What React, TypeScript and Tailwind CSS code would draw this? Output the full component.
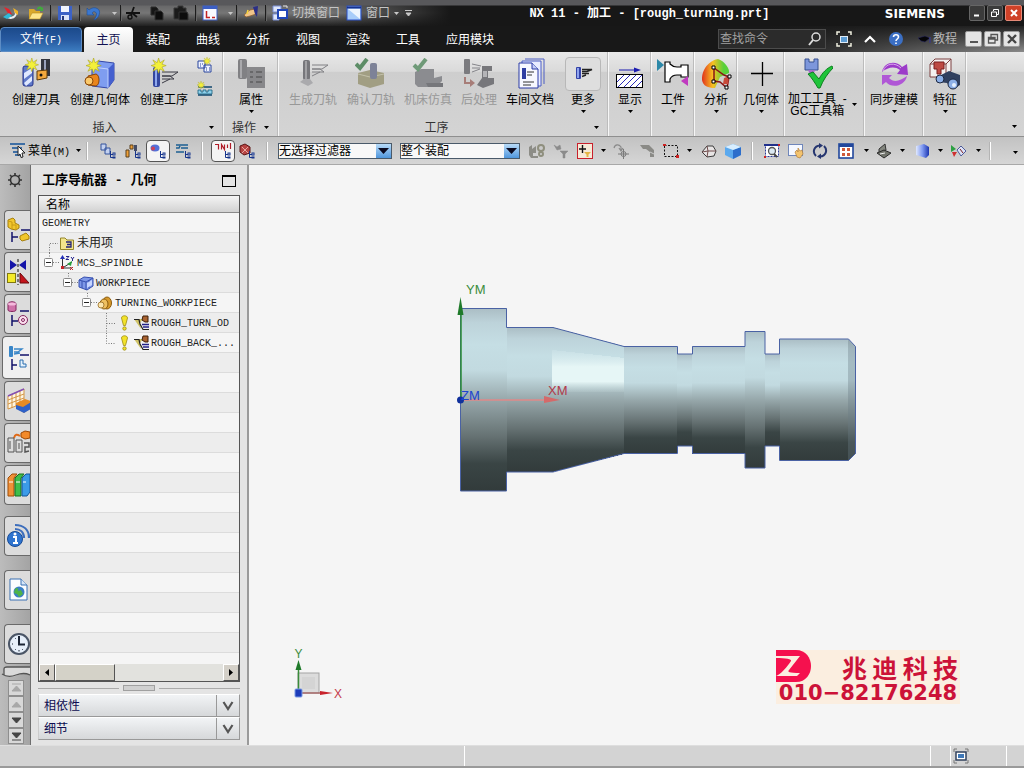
import type { ReactNode } from 'react'
import { clsx } from 'clsx'

// ---------- drawing helpers ----------

function Svg({ w = 16, h = 16, children }: { w?: number; h?: number; children: ReactNode }) {
  return (
    <svg width={w} height={h} viewBox={`0 0 ${w} ${h}`} className="block shrink-0" aria-hidden="true">
      {children}
    </svg>
  )
}

function Caret({ light }: { light?: boolean }) {
  return (
    <Svg w={5} h={3}>
      <path d="M0 0H5L2.5 3Z" fill={light ? '#c8c8c8' : '#000'} />
    </Svg>
  )
}

const SPARK = 'M8 0L9.5 5L14 2L11.5 6.5L16 8L11.5 9.5L14 14L9.5 11.5L8 16L6.5 11.5L2 14L4.5 9.5L0 8L4.5 6.5L2 2L6.5 5Z'

function Spark({ x, y, s = 1 }: { x: number; y: number; s?: number }) {
  return <path transform={`translate(${x} ${y}) scale(${s})`} d={SPARK} fill="#f3f03a" stroke="#a9a21c" strokeWidth="0.6" />
}

// cylinder cutter with feed lines beside it
function Mill({ gray, x = 0, y = 0, s = 1 }: { gray?: boolean; x?: number; y?: number; s?: number }) {
  const c = gray ? ['#77777b', '#a2a2a5', '#808084'] : ['#34479f', '#8fa8ee', '#3a3a44']
  return (
    <g transform={`translate(${x} ${y}) scale(${s})`}>
      <rect x="0" y="0" width="7" height="20" rx="2" fill={c[0]} />
      <rect x="2" y="1" width="2" height="18" fill={c[1]} />
      <path d="M9 5H25L19 9H9M9 9H17L21 12H9M9 16L17 12" fill="none" stroke={c[2]} />
    </g>
  )
}

// ---------- ribbon icons (32 x 32) ----------

const CreateTool = () => (
  <Svg w={32} h={32}>
    <rect x="21" y="1" width="9" height="17" fill="#33363f" />
    <rect x="24" y="2" width="2" height="14" fill="#9aa3bd" />
    <path d="M17 13L27 12V20L17 22Z" fill="#f3a83c" stroke="#5d3a0a" />
    <circle cx="21" cy="17" r="1.5" fill="#111" />
    <rect x="3" y="8" width="10" height="20" rx="2" fill="#5f79c9" stroke="#26348c" />
    <path d="M4 15L12 10V15L4 21ZM4 25L12 18V23L6 28Z" fill="#dfe8ff" />
    <Spark x={5} y={0} s={0.85} />
  </Svg>
)

const CreateGeometry = () => (
  <Svg w={32} h={32}>
    <path d="M8 9L14 3L30 5V22L24 30L8 28Z" fill="#7f9df0" stroke="#3347a8" />
    <path d="M24 11L30 5V22L24 30Z" fill="#4560cf" />
    <path d="M8 9L24 11V30" fill="none" stroke="#c3d2ff" />
    <path d="M4 18L12 16C16 17 16 27 12 28L4 27Z" fill="#e9851c" stroke="#8a4607" />
    <circle cx="5" cy="23" r="4" fill="#fbc96b" stroke="#8a4607" />
    <Spark x={2} y={0} s={0.95} />
  </Svg>
)

const CreateOperation = () => (
  <Svg w={32} h={32}>
    <Mill x={5} y={9} />
    <Spark x={3} y={0} s={0.95} />
  </Svg>
)

const PropertiesIcon = () => (
  <Svg w={32} h={32}>
    <rect x="3" y="1" width="9" height="20" rx="2" fill="#818184" />
    <rect x="5" y="2" width="2" height="18" fill="#a9a9ac" />
    <rect x="12" y="9" width="18" height="21" fill="#88888b" />
    <path d="M15 14h3M15 19h3M15 24h3M21 14h6M21 19h6M21 24h6" stroke="#5d5d60" strokeWidth="1.5" />
  </Svg>
)

const GenerateIcon = () => (
  <Svg w={32} h={32}>
    <Mill gray x={6} y={2} />
    <path d="M3 24L7 21H13L16 25L11 28Z" fill="#aaaaad" />
  </Svg>
)

const VerifyIcon = () => (
  <Svg w={32} h={32}>
    <path d="M3 15L15 12L29 15V26L15 30L3 26Z" fill="#a19e83" />
    <path d="M3 16L15 19L29 16" fill="none" stroke="#c3c1aa" />
    <rect x="15" y="5" width="7" height="16" rx="2" fill="#7d8297" />
    <path d="M1 6L5 10L12 1" fill="none" stroke="#5d8d67" strokeWidth="4" />
  </Svg>
)

const SimulateIcon = () => (
  <Svg w={32} h={32}>
    <path d="M3 14L9 11H22V20L30 18V23L24 29H6L3 26Z" fill="#8b8c90" />
    <path d="M14 25H31V29H16Z" fill="#76777b" />
    <path d="M2 7L6 11L14 1" fill="none" stroke="#6f9a78" strokeWidth="4" />
  </Svg>
)

const PostIcon = () => (
  <Svg w={32} h={32}>
    <rect x="1" y="1" width="6" height="15" rx="1" fill="#7b7b7f" />
    <path d="M9 6L18 8M9 10H17M9 14L17 11" stroke="#85858a" />
    <path d="M2 19V25H8" fill="none" stroke="#a77d78" strokeWidth="2" />
    <path d="M7 21L12 25L7 29Z" fill="#a77d78" />
    <path d="M19 8H29V13H25V20H31V26L20 30L14 27L19 20Z" fill="#77777b" />
    <path d="M20 13H24V19H20Z" fill="#b4b4b7" />
  </Svg>
)

const ShopDocIcon = () => (
  <Svg w={32} h={32}>
    <path d="M11 1H30V26" fill="none" stroke="#4a5cc4" />
    <path d="M8 3H27V28H8Z" fill="#e8ecff" stroke="#4a5cc4" />
    <path d="M5 5H18L24 11V30H5Z" fill="#f7f8ff" stroke="#2a3aa6" />
    <path d="M18 5V11H24" fill="#c4cdf7" stroke="#2a3aa6" />
    <rect x="8" y="10" width="4" height="11" fill="#2f3ea2" />
    <path d="M13 14H20M13 17H18M9 24H20M9 27H17" stroke="#333" />
  </Svg>
)

const MoreIcon = () => (
  <Svg w={32} h={32}>
    <rect x="9" y="9" width="5" height="12" rx="1" fill="#3443a8" />
    <rect x="10" y="10" width="2" height="10" fill="#8fa4ee" />
    <path d="M15 11.500H25L20 13.500H15M15 15.500H22M15 18.500L19 17" fill="none" stroke="#222" strokeWidth="1.400" />
  </Svg>
)

const DisplayIcon = () => (
  <Svg w={32} h={32}>
    <path d="M5 12H21" stroke="#1a1ab0" />
    <path d="M20 9.500L27 12L20 14.500Z" fill="#1a1ab0" />
    <rect x="2.500" y="16.500" width="26" height="13" fill="#fff" stroke="#000" />
    <path d="M3 24L10 17M4 29L16 17M10 29L22 17M16 29L28 17M22 29L28 23" stroke="#2b2bb8" />
  </Svg>
)

const WorkpieceIcon = () => (
  <Svg w={32} h={32}>
    <path d="M0 1V13L7 7Z" fill="#2c88a8" />
    <path d="M8 4H13V6C15 8 17 9 20 9H24V7H31V19H24V17H20C16 17 14 19 13 21V24H8Z" fill="#fff" stroke="#000" strokeWidth="1.2" />
    <path d="M24 23L31 18V28Z" fill="#c03ac0" />
  </Svg>
)

const AnalysisIcon = () => (
  <Svg w={32} h={32}>
    <defs>
      <linearGradient id="ana">
        <stop offset="0" stopColor="#e0321c" />
        <stop offset="0.4" stopColor="#f8c022" />
        <stop offset="0.8" stopColor="#58d03a" />
      </linearGradient>
    </defs>
    <path d="M2 22C2 8 12 2 18 1C24 3 30 10 29 15L20 19L15 30C8 30 3 28 2 22Z" fill="url(#ana)" />
    <path d="M14 10L24 17L29 19L27 30L20 24L14 23Z" fill="none" stroke="#8a1414" strokeWidth="1.5" />
    <path d="M24 20L29 18L28 26L23 26Z" fill="#c84a3a" />
    <path d="M12 8h3v3h-3zM12 22h3v3h-3zM28 17h3v3h-3zM25 28h3v3h-3z" fill="#fff" stroke="#000" />
  </Svg>
)

const PlusIcon = () => (
  <Svg w={32} h={32}>
    <path d="M6 15.500H28M17.500 4V28" stroke="#000" strokeWidth="1.3" />
  </Svg>
)

const GcToolIcon = () => (
  <Svg w={32} h={32}>
    <path d="M4 1H8V4H13V1H17V12H4Z" fill="#7d97dc" stroke="#37508f" />
    <path d="M7 12H14L12 19H10Z" fill="#a86cc9" />
    <path d="M7 16L12 14L18 21C21 15 26 10 31 8L32 10C27 15 22 22 19 30H17C14 25 11 20 7 16Z" fill="#1fc43a" stroke="#0e8020" />
  </Svg>
)

const SyncIcon = () => (
  <Svg w={32} h={32}>
    <path d="M4 14C6 4 18 2 24 9L29 6L30 17L19 16L22 12C17 8 10 9 4 14Z" fill="#9c3bc9" />
    <path d="M29 18C27 28 14 31 8 24L4 27V17H14L11 20C16 25 22 23 29 18Z" fill="#b057d6" />
    <path d="M5 13C8 5 17 4 23 10" fill="none" stroke="#dba8ef" />
  </Svg>
)

const FeatureIcon = () => (
  <Svg w={32} h={32}>
    <path d="M1 6L6 1H22V13L17 19H1Z" fill="#f4f0f0" stroke="#7c4040" />
    <path d="M1 6H17V19M17 6L22 1" fill="none" stroke="#7c4040" />
    <path d="M5 4H15V11H12V16H8V11H5Z" fill="#bd4a44" stroke="#7a1f1f" />
    <path d="M12 17L20 13L31 17V27L24 31L18 25L9 24Z" fill="#31405f" />
    <circle cx="11" cy="21" r="4" fill="#8db0e8" stroke="#1c2740" />
    <circle cx="24" cy="26" r="5" fill="#8db0e8" stroke="#1c2740" />
    <circle cx="25" cy="27" r="2" fill="#e6f1ff" />
  </Svg>
)

const CreateProgram = () => (
  <Svg>
    <path d="M1 4H8V11H1ZM7 8H14V15H7Z" fill="#eef2ff" stroke="#28459c" />
    <path d="M3 7h1M5 7h1M3 9h1M9 11h1M12 11h1M9 13h1M12 13h1" stroke="#28459c" />
    <Spark x={6} y={0} s={0.5} />
  </Svg>
)

const CreateMethod = () => (
  <Svg>
    <path d="M1 6H15M1 14H15" stroke="#12486f" strokeWidth="1.5" />
    <path d="M1 9H4V11H6V9H9V11H11V9H15V13H1Z" fill="#8fd0ea" stroke="#17607f" strokeWidth="0.8" />
    <Spark x={0} y={0} s={0.5} />
  </Svg>
)

// ---------- small icons (16 x 16) ----------

const NxLogo = () => (
  <Svg>
    <path d="M1 2L6 4L9 9L6 10Z" fill="#e8222c" />
    <path d="M3 12C6 15 13 15 14 8L11 4L12 9C11 12 6 12 3 12Z" fill="#e8eef4" />
    <path d="M0 12L6 8L9 11L4 14Z" fill="#2fb9d8" />
    <path d="M10 3L15 6L15 10L12 8Z" fill="#f1b326" />
  </Svg>
)
const FolderOpen = () => (
  <Svg>
    <path d="M1 4H6L8 6H12V14H1Z" fill="#d9a92c" />
    <path d="M4 8H15L12 14H1Z" fill="#fde58a" stroke="#b68a1c" strokeWidth="0.6" />
    <path d="M9 4C10 1 13 1 14 3L15 2V6H11L13 5C12 3 11 3 10 5Z" fill="#3fae3a" />
  </Svg>
)
const SaveIcon = () => (
  <Svg>
    <path d="M1 1H15V15H1Z" fill="#3c62c6" />
    <rect x="4" y="1" width="8" height="6" fill="#f2f6ff" />
    <rect x="4" y="10" width="8" height="5" fill="#dce4f8" />
    <rect x="5" y="11" width="2" height="4" fill="#26387a" />
  </Svg>
)
const UndoIcon = () => (
  <Svg>
    <path d="M1 3L3 5C8 0 16 4 13 10C12 13 10 14 8 15C10 12 12 8 9 7C8 6 7 7 6 8L8 10L1 10Z" fill="#3b78d0" stroke="#1f4d96" strokeWidth="0.6" />
  </Svg>
)
const CutIcon = () => (
  <Svg>
    <path d="M1 8H15M9 2L6 10M7 8L12 12" stroke="#111" strokeWidth="1.8" />
    <circle cx="5" cy="12" r="2" fill="none" stroke="#111" strokeWidth="1.4" />
  </Svg>
)
const CopyIcon = () => (
  <Svg>
    <path d="M2 2H7L9 4V10H2Z" fill="#161616" stroke="#2c2c2c" />
    <path d="M6 6H12L14 8V15H6Z" fill="#0d0d0d" stroke="#333" />
  </Svg>
)
const PasteIcon = () => (
  <Svg>
    <path d="M1 3H5V1H10V3H13V14H1Z" fill="#1b1b1b" stroke="#383838" />
    <path d="M6 7H14L15 9V15H6Z" fill="#0d0d0d" stroke="#333" />
  </Svg>
)
const CsysIcon = () => (
  <Svg>
    <rect x="1" y="1" width="14" height="14" fill="#f8f9ff" stroke="#3c5fc4" />
    <rect x="1" y="1" width="14" height="3" fill="#3c5fc4" />
    <path d="M4.500 6V12.500H8M10 12.500H13" fill="none" stroke="#c32222" strokeWidth="1.500" />
  </Svg>
)
const TouchIcon = () => (
  <Svg>
    <path d="M1 10L7 5L12 4L13 9L7 11L3 12Z" fill="#f0c489" stroke="#8c5a26" strokeWidth="0.7" />
    <path d="M10 2L15 1L14 12L12 9Z" fill="#2b2f86" />
    <path d="M4 9l1-4" stroke="#f7d540" strokeWidth="1.5" />
  </Svg>
)
const SwitchWinIcon = () => (
  <Svg>
    <path d="M1 1H9V7H1ZM1 9H7V15H1Z" fill="#dfe6fa" stroke="#7a8fd6" />
    <rect x="6" y="5" width="9" height="8" fill="#fff" stroke="#2146b8" strokeWidth="2" />
    <path d="M11 1H15V3" fill="none" stroke="#e8e8e8" />
  </Svg>
)
const WinIcon = () => (
  <Svg>
    <rect x="1" y="1" width="14" height="14" fill="#a9cdfa" stroke="#2a50c8" />
    <path d="M2 4H14V14Z" fill="#fff" opacity="0.800" />
    <path d="M1 2.500H15" stroke="#16318f" strokeWidth="2" />
  </Svg>
)

const MenuCursor = () => (
  <Svg w={18}>
    <path d="M1 2H16M3 6H13M4 10H13M6 13H12" stroke="#3f6fa5" strokeWidth="2" />
    <path d="M9 4L16 11H13L14 15L12 15.500L11 12L9 13.500Z" fill="#fff" stroke="#222" />
  </Svg>
)

function NavIcon({ kind }: { kind: 'program' | 'tool' | 'geometry' | 'method' | 'path' | 'stock' }) {
  return (
    <Svg w={17}>
      {kind === 'program' && <path d="M1 1H6V7H1ZM5 5H10V11H5Z" fill="#c3d1ef" stroke="#32539c" />}
      {kind === 'tool' && (
        <>
          <path d="M5 2H8V6H5ZM1 7H4V14H1Z" fill="#f0a037" stroke="#594020" />
          <path d="M9 2H12V8H9Z" fill="#444c66" />
        </>
      )}
      {kind === 'geometry' && (
        <>
          <ellipse cx="5" cy="5" rx="4.500" ry="3.500" fill="#5470d8" />
          <circle cx="3" cy="5.500" r="2" fill="#cc4258" />
        </>
      )}
      {kind === 'method' && <path d="M1 2H13M1 5H4L5 3M6 5H13M1 9H9" stroke="#1c5f92" strokeWidth="1.500" fill="none" />}
      {kind === 'path' && <path d="M0 1.500H3.500V6.500M6.500 6.500V1.500L9.500 6.500V1.500M12.500 5V1.500M15.500 0V6" stroke="#b01c28" strokeWidth="1.200" fill="none" />}
      {kind === 'stock' && (
        <>
          <path d="M1 3L6 1L11 4V10L5 12L1 9Z" fill="#b64342" stroke="#5c1717" />
          <path d="M3 4L9 10M9 4L3 10" stroke="#e9a7a0" />
        </>
      )}
      <path d="M10.500 8V14.500H13M10.500 11.500H13" stroke="#17358b" fill="none" />
      <rect x="13" y="10" width="2" height="2" fill="#fff" stroke="#17358b" />
      <rect x="13" y="14" width="2" height="1" fill="#fff" stroke="#17358b" />
    </Svg>
  )
}

const GrayAssembly = () => (
  <Svg w={18}>
    <path d="M1 4L4 2V6L8 3V10H5V13H10V15H3L1 12Z" fill="#8c8c86" />
    <circle cx="13" cy="5" r="3" fill="none" stroke="#8f8f7e" strokeWidth="2" />
    <circle cx="13" cy="11" r="2" fill="none" stroke="#8f8f7e" strokeWidth="2" />
  </Svg>
)
const GrayFilter = () => (
  <Svg>
    <path d="M1 2L4 4L7 2L8 6L4 7ZM7 8H15L12 11V15H10V11Z" fill="#8b8b8b" stroke="#8b8b8b" strokeWidth="0.500" />
  </Svg>
)
const SnapPoint = () => (
  <Svg>
    <rect x="0.500" y="0.500" width="15" height="15" fill="#f6ead8" stroke="#c8202c" />
    <path d="M2 6H9M5.500 2V10" stroke="#111" strokeWidth="1.400" />
    <path d="M7 9H14L11.500 11.500V14H9.500V11.500Z" fill="#e5b545" />
  </Svg>
)
const GrayMove = () => (
  <Svg>
    <path d="M1 5C2 1 6 1 8 4L8 7M6 5L8 8L10 5" fill="none" stroke="#8a8a8a" strokeWidth="1.200" />
    <path d="M5 11H16M10.500 6V16" stroke="#7a7a7a" />
    <circle cx="10.500" cy="11" r="2.500" fill="none" stroke="#7a7a7a" />
  </Svg>
)
const GraySweep = () => (
  <Svg>
    <path d="M1 2H10L15 7V14H11V9L7 6L4 6Z" fill="#8a8a86" />
    <path d="M11 9l4 2" stroke="#ccc" />
  </Svg>
)
const MarqueeIcon = () => (
  <Svg>
    <rect x="1.500" y="2.500" width="13" height="11" fill="none" stroke="#111" strokeDasharray="2 1.500" />
    <path d="M0 1h3v2h-3zM13 12h3v3h-3z" fill="#c22" />
  </Svg>
)
const WireCube = () => (
  <Svg>
    <path d="M1 9L6 3H12L15 8L13 13L6 14Z" fill="#e7e4e4" stroke="#3c3c3c" />
    <path d="M6 3L7 8L6 14M7 8L15 8M1 9L7 8" fill="none" stroke="#6f4b4b" />
  </Svg>
)
const BlueCube = () => (
  <Svg>
    <path d="M0 4L8 1L16 4V12L8 16L0 12Z" fill="#5ba9ee" />
    <path d="M8 7L16 4V12L8 16Z" fill="#2d6ecb" />
    <path d="M0 4L8 1L16 4L8 7Z" fill="#d8eeff" />
  </Svg>
)
const FitIcon = () => (
  <Svg>
    <rect x="1.500" y="2.500" width="13" height="11" fill="#fff" stroke="#2a3a9a" strokeDasharray="2 1" />
    <path d="M0 2H16" stroke="#20308c" strokeWidth="2" />
    <circle cx="8" cy="8" r="3.500" fill="#dbe8f2" stroke="#555" strokeWidth="1.300" />
    <path d="M10 11L13 14" stroke="#444" strokeWidth="2" />
    <path d="M0 13h2v2h-2zM14 1h2v2h-2z" fill="#c22" />
  </Svg>
)
const PanIcon = () => (
  <Svg>
    <rect x="0.500" y="1.500" width="14" height="11" fill="#f5f8ff" stroke="#6f86ba" />
    <path d="M7 9L9 7L10 9V5L12 8L14 7L15 11L12 15L9 14Z" fill="#f3c36e" stroke="#a9722c" strokeWidth="0.600" />
  </Svg>
)
const RotateIcon = () => (
  <Svg>
    <path d="M4 13C0 9 2 3 8 2.500M12 3C16 7 14 13 8 13.500" fill="none" stroke="#25356f" strokeWidth="2" />
    <path d="M7 0L11 2.500L7 5.500ZM9 10.500L5 13.500L9 16Z" fill="#25356f" />
  </Svg>
)
const ViewLayout = () => (
  <Svg>
    <rect x="1" y="1" width="14" height="14" fill="#fff" stroke="#21479c" strokeWidth="1.600" />
    <rect x="1" y="1" width="14" height="3" fill="#21479c" />
    <path d="M4 5h3v3h-3zM9 5h3v3h-3zM4 10h3v3h-3zM9 10h3v3h-3z" fill="#d05a3a" />
  </Svg>
)
const OrientIcon = () => (
  <Svg>
    <path d="M3 6L9 1L10 7L3 10Z" fill="#84877f" stroke="#333" />
    <path d="M1 10L8 7L15 10L8 15Z" fill="#70736b" stroke="#2b2b2b" />
    <path d="M4 11l5-1" stroke="#eee" />
  </Svg>
)
const ShadedIcon = () => (
  <Svg>
    <defs>
      <linearGradient id="shaded">
        <stop offset="0" stopColor="#dfe8ff" />
        <stop offset="0.500" stopColor="#7e98f0" />
        <stop offset="1" stopColor="#1c36b0" />
      </linearGradient>
    </defs>
    <path d="M2 3L10 1L15 4V12L12 15L2 12Z" fill="url(#shaded)" />
  </Svg>
)
const EditObject = () => (
  <Svg>
    <path d="M1 2L6 6L1 9Z" fill="#2da043" />
    <path d="M2 9L7 9L4 14Z" fill="#cf3131" />
    <path d="M7 7L11 3L16 8L11 13Z" fill="#dce1f5" stroke="#4e5c9a" />
    <path d="M10 6l3 4" stroke="#7a2020" />
  </Svg>
)

// ---------- resource bar icons (24 x 26) ----------

const BarAssembly = () => (
  <Svg w={24} h={26}>
    <path d="M1 3L6 1L8 3V6L12 8V11L9 13L4 12L1 10Z" fill="#f1c62c" stroke="#a6800e" />
    <path d="M1 4L5 5V12M5 8L9 8V13" fill="none" stroke="#c99a12" />
    <path d="M5 15V25M5 20H11M14 13H23" stroke="#12126a" strokeWidth="1.500" />
    <path d="M13 19L19 16L22 19V22L15 24L13 22Z" fill="#f1c62c" stroke="#a6800e" />
  </Svg>
)
const BarConstraint = () => (
  <Svg w={24} h={26}>
    <path d="M3 1V11L10 6ZM19 1V11L12 6Z" fill="#1414a8" />
    <path d="M11 0V26" stroke="#111" strokeDasharray="3 2" />
    <rect x="0.500" y="14.500" width="8" height="9" fill="#f4ea2a" stroke="#807810" />
    <path d="M13 14V24H22Z" fill="#c4141c" stroke="#6a0a0e" />
  </Svg>
)
const BarPart = () => (
  <Svg w={24} h={26}>
    <path d="M1 3C1 0 9 0 9 3V9C9 11 1 11 1 9Z" fill="#cf72a9" stroke="#83275f" />
    <ellipse cx="5" cy="3" rx="4" ry="1.500" fill="#f4b9dc" />
    <path d="M5 14V25M5 20H11M13 10H22" stroke="#12126a" strokeWidth="1.500" />
    <circle cx="16" cy="19" r="4.500" fill="#fbe0ee" stroke="#83275f" />
    <circle cx="16" cy="19" r="1.500" fill="none" stroke="#83275f" />
  </Svg>
)
const BarOperation = () => (
  <Svg w={24} h={26}>
    <rect x="2" y="1" width="4" height="11" rx="1" fill="#3986c8" />
    <path d="M7 4H15L11 7H7M7 9L13 8" fill="none" stroke="#3986c8" strokeWidth="1.300" />
    <path d="M5 14V25M5 20H10M13 10H22" stroke="#12126a" strokeWidth="1.500" />
    <path d="M13 15H16V19H19V22H13Z" fill="#e6f2fb" stroke="#2a6fb0" />
  </Svg>
)
const BarMachine = () => (
  <Svg w={24} h={26}>
    <path d="M1 8L17 1V15L1 21ZM5 6V20M9 4V18M13 3V17M1 12L17 6M1 16L17 10" fill="#fdf6e3" stroke="#d49545" />
    <path d="M1 8L17 1" stroke="#8350b5" strokeWidth="1.500" />
    <path d="M9 15L18 11L24 13V20L17 25L9 20Z" fill="#e58b25" />
    <path d="M16 19L24 14V21L17 25L9 21V17Z" fill="#2d61c8" />
  </Svg>
)
const BarPost = () => (
  <Svg w={24} h={26}>
    <path d="M14 3L18 1L23 2V8L18 9L14 7Z" fill="#f28a2b" stroke="#9b4806" />
    <path d="M7 8C8 4 10 4 13 6" fill="none" stroke="#e06a18" strokeWidth="2" />
    <path d="M1 8H7V22H1ZM9 10H15V22H9Z" fill="#dcdcdc" stroke="#555" />
    <path d="M17 13H22V17H18V22L22 21" fill="none" stroke="#555" strokeWidth="1.500" />
    <path d="M3 11v8M12 13v6" stroke="#555" />
  </Svg>
)
const BarLibrary = () => (
  <Svg w={24} h={26}>
    <path d="M1 6L5 2H10L7 6V24H1Z" fill="#f09138" stroke="#a04f08" />
    <path d="M8 6L12 2H17L14 6V24H8Z" fill="#3fbe4b" stroke="#17701f" />
    <path d="M15 6L19 2H23V20L20 24H15Z" fill="#3b9be8" stroke="#14559a" />
    <path d="M2 10H6M9 10H13M16 10H19" stroke="#fff" />
  </Svg>
)
const BarInfo = () => (
  <Svg w={24} h={26}>
    <path d="M8 6C13 6 17 9 17 15M8 2C17 2 22 7 22 15" fill="none" stroke="#3d6ebc" strokeWidth="2.200" />
    <circle cx="8" cy="16" r="7.500" fill="#2f74cf" stroke="#174a95" />
    <path d="M6 14H9V20M6 20H11" fill="none" stroke="#fff" strokeWidth="2" />
    <circle cx="8" cy="11" r="1.500" fill="#fff" />
  </Svg>
)
const BarWeb = () => (
  <Svg w={24} h={26}>
    <path d="M3 2H14L20 8V23H3Z" fill="#fbfdff" stroke="#3a70b3" />
    <path d="M14 2V8H20" fill="#d5e5f7" stroke="#3a70b3" />
    <circle cx="12" cy="15" r="5.500" fill="#3b7fc4" />
    <path d="M8 12C10 10 12 11 11 14L14 13L16 17L12 20L10 17L7 16Z" fill="#4fb348" />
  </Svg>
)
const BarClock = () => (
  <Svg w={24} h={26}>
    <circle cx="12" cy="13" r="10" fill="#e6effa" stroke="#4a5566" strokeWidth="2" />
    <path d="M12 5V13.500H18" fill="none" stroke="#1a2434" strokeWidth="2" />
    <path d="M5 13h1M12 19v1.500M8 7l.7.7M8 19l.7-.7M16 19l-.7-.7" stroke="#1a2434" />
  </Svg>
)

// ---------- data ----------

type RibbonItem = { label: string; icon: ReactNode; width: string; disabled?: boolean; menu?: boolean; boxed?: boolean }

const insertItems: RibbonItem[] = [
  { label: '创建刀具', icon: <CreateTool />, width: 'w-[58px]' },
  { label: '创建几何体', icon: <CreateGeometry />, width: 'w-[70px]' },
  { label: '创建工序', icon: <CreateOperation />, width: 'w-[58px]' },
]

const operationItems: RibbonItem[] = [
  { label: '生成刀轨', icon: <GenerateIcon />, width: 'w-[58px]', disabled: true },
  { label: '确认刀轨', icon: <VerifyIcon />, width: 'w-[58px]', disabled: true },
  { label: '机床仿真', icon: <SimulateIcon />, width: 'w-14', disabled: true },
  { label: '后处理', icon: <PostIcon />, width: 'w-[46px]', disabled: true },
  { label: '车间文档', icon: <ShopDocIcon />, width: 'w-14' },
  { label: '更多', icon: <MoreIcon />, width: 'w-[50px]', menu: true, boxed: true },
]

const dropGroups: RibbonItem[] = [
  { label: '显示', icon: <DisplayIcon />, width: 'w-[42px]', menu: true },
  { label: '工件', icon: <WorkpieceIcon />, width: 'w-[42px]', menu: true },
  { label: '分析', icon: <AnalysisIcon />, width: 'w-[42px]', menu: true },
  { label: '几何体', icon: <PlusIcon />, width: 'w-[46px]', menu: true },
]

const tabs = ['装配', '曲线', '分析', '视图', '渲染', '工具', '应用模块']

const barTabs = [
  { name: '装配导航器', icon: <BarAssembly /> },
  { name: '约束导航器', icon: <BarConstraint /> },
  { name: '部件导航器', icon: <BarPart /> },
  { name: '工序导航器', icon: <BarOperation />, active: true },
  { name: '机床导航器', icon: <BarMachine /> },
  { name: '加工特征导航器', icon: <BarPost /> },
  { name: '重用库', icon: <BarLibrary /> },
]

// ---------- title bar and tabs ----------

function QuickButton({ name, width = 'w-7', children }: { name: string; width?: string; children: ReactNode }) {
  return (
    <button aria-label={name} className={clsx('flex h-5 items-center justify-center', width)}>
      {children}
    </button>
  )
}

const DarkSep = () => <span className="h-4 w-px bg-[#1c1c1c] shadow-[1px_0_0_#666]" />

function TitleBar() {
  return (
    <header className="flex h-[26px] items-center bg-[linear-gradient(#58585b_5px,transparent_6px),linear-gradient(90deg,transparent_32%,#171717_44%),linear-gradient(#5c5c5e,#767676_50%,#202020_100%)] text-[#c4c4c4]">
      <QuickButton name="NX" width="w-[22px]"><NxLogo /></QuickButton>
      <QuickButton name="打开"><FolderOpen /></QuickButton>
      <DarkSep />
      <QuickButton name="保存"><SaveIcon /></QuickButton>
      <DarkSep />
      <QuickButton name="撤消"><UndoIcon /></QuickButton>
      <QuickButton name="撤消列表" width="w-3"><Caret light /></QuickButton>
      <DarkSep />
      <QuickButton name="剪切" width="w-6"><CutIcon /></QuickButton>
      <QuickButton name="复制" width="w-6"><CopyIcon /></QuickButton>
      <QuickButton name="粘贴" width="w-6"><PasteIcon /></QuickButton>
      <span className="w-[2px]" />
      <DarkSep />
      <QuickButton name="坐标系"><CsysIcon /></QuickButton>
      <QuickButton name="坐标系列表" width="w-3"><Caret light /></QuickButton>
      <DarkSep />
      <QuickButton name="触摸模式"><TouchIcon /></QuickButton>
      <DarkSep />
      <button className="flex items-center gap-1 pl-[6px]">
        <SwitchWinIcon />切换窗口
      </button>
      <button className="flex items-center gap-1 pl-[6px]">
        <WinIcon />窗口
      </button>
      <QuickButton name="窗口列表" width="w-3"><Caret light /></QuickButton>
      <QuickButton name="自定义" width="w-3">
        <Svg w={7} h={7}>
          <path d="M0 0.500H7M1 3H6L3.500 6Z" fill="#c8c8c8" stroke="#c8c8c8" />
        </Svg>
      </QuickButton>
      <h1 className="flex-1 pt-[2px] text-center font-['Liberation_Mono','Noto_Sans_CJK_SC',monospace] text-xs font-bold whitespace-nowrap text-white">
        NX 11 - 加工 - [rough_turning.prt]
      </h1>
      <span className="mr-6 pt-[2px] font-['DejaVu_Sans',sans-serif] text-[12px] font-bold text-white">SIEMENS</span>
      <div className="flex gap-[2px] pr-[2px]">
        <button aria-label="最小化" className="flex h-4 w-4 items-center justify-center rounded-xs border border-[#666] bg-[#3b3b3b]">
          <Svg w={10} h={10}><path d="M2 7.500H7" stroke="#fff" strokeWidth="2" /></Svg>
        </button>
        <button aria-label="还原" className="flex h-4 w-4 items-center justify-center rounded-xs border border-[#666] bg-[#3b3b3b]">
          <Svg w={10} h={10}><path d="M3.500 3V1.500H8.500V6.500H7M1.500 4H6.500V8.500H1.500Z" fill="none" stroke="#fff" /></Svg>
        </button>
        <button aria-label="关闭" className="flex h-4 w-[17px] items-center justify-center rounded-xs border border-[#e58a78] bg-[#cf4128]">
          <Svg w={10} h={10}><path d="M2 2L8 8M8 2L2 8" stroke="#fff" strokeWidth="2" /></Svg>
        </button>
      </div>
    </header>
  )
}

function TabRow() {
  const docButton = 'flex h-4 w-[17px] items-center justify-center rounded-xs border border-[#999] bg-[#e4e4e4]'
  return (
    <nav className="flex h-[26px] items-end bg-[linear-gradient(90deg,#181818_75%,transparent),linear-gradient(#222,#8a8a8a)] text-white">
      <button className="mr-[2px] h-[25px] w-[82px] rounded-t-sm border border-[#5d8cc4] bg-linear-to-b from-[#1b4a8b] via-[#27599f] to-[#3c7cc0]">
        文件<span className="font-['Liberation_Mono',monospace] text-[10px]">(F)</span>
      </button>
      <button className="h-[25px] w-[49px] rounded-t-sm bg-linear-to-b from-white to-[#e6e6e6] text-[#101050]">主页</button>
      {tabs.map((tab) => (
        <button key={tab} className="h-[25px] px-[13px] whitespace-nowrap">{tab}</button>
      ))}
      <div className="ml-auto flex h-[26px] items-center">
        <label className="flex h-5 w-[108px] items-center border border-[#4c4c4c] bg-[#2b2b2b]">
          <input aria-label="查找命令" placeholder="查找命令" className="w-0 flex-1 bg-transparent pl-px outline-none placeholder:text-[#a0a0a0]" />
          <Svg w={18}>
            <circle cx="9" cy="6" r="4" fill="none" stroke="#ddd" strokeWidth="1.500" />
            <path d="M6 9L2 14" stroke="#ddd" strokeWidth="2" />
          </Svg>
        </label>
        <button aria-label="全屏" className="ml-[10px]">
          <Svg>
            <path d="M1 4V1H4M12 1H15V4M15 12V15H12M4 15H1V12" fill="none" stroke="#f0f0e0" strokeWidth="1.500" />
            <rect x="4.500" y="5.500" width="7" height="6" fill="#5b9bd3" stroke="#dfeaf5" />
          </Svg>
        </button>
        <button aria-label="最小化功能区" className="ml-[10px]">
          <Svg><path d="M3 11L8 6L13 11" fill="none" stroke="#fff" strokeWidth="2.200" /></Svg>
        </button>
        <button aria-label="帮助" className="ml-[10px]">
          <Svg>
            <circle cx="8" cy="8" r="7" fill="#3b6fc4" />
            <path d="M5.500 6C5.500 3 10.500 3 10.500 6C10.500 8 8 8 8 10M8 11.500V13" fill="none" stroke="#fff" strokeWidth="1.600" />
          </Svg>
        </button>
        <a href="#tutorial" className="mr-2 ml-[14px] flex items-center gap-px text-[#b8b8b8]">
          <Svg w={14}>
            <path d="M0 7L7 5L12 7L7 11L3 10Z" fill="#050508" stroke="#2a2a60" strokeWidth="0.600" />
            <path d="M12 6V12" stroke="#3a3a80" strokeWidth="1.500" />
          </Svg>
          教程
        </a>
        <div className="flex gap-[2px] pr-1">
          <button aria-label="最小化部件" className={docButton}>
            <Svg w={12} h={12}><path d="M2 9H10" stroke="#555" strokeWidth="2" /></Svg>
          </button>
          <button aria-label="还原部件" className={docButton}>
            <Svg w={12} h={12}><path d="M4 4V1.500H10.500V7H8M1.500 4.500H8V10H1.500ZM1.500 6H8" fill="none" stroke="#555" strokeWidth="1.300" /></Svg>
          </button>
          <button aria-label="关闭部件" className={docButton}>
            <Svg w={12} h={12}><path d="M2 2L10 10M10 2L2 10" stroke="#444" strokeWidth="2.400" /></Svg>
          </button>
        </div>
      </div>
    </nav>
  )
}

// ---------- ribbon ----------

function RibbonButton({ label, icon, width, disabled, menu, boxed }: RibbonItem) {
  return (
    <button disabled={disabled} className={clsx('flex flex-col items-center', width, disabled ? 'text-[#989898]' : 'text-black')}>
      <span className={clsx('flex h-[34px] w-9 items-center justify-center', boxed && 'rounded-sm border border-[#b8b8b8] bg-[#dedede]')}>
        {icon}
      </span>
      <span className="pt-px leading-4 whitespace-nowrap">{label}</span>
      {menu && <span className="pt-[2px]"><Caret /></span>}
    </button>
  )
}

function RibbonGroup({ title, className, children }: { title?: string; className?: string; children: ReactNode }) {
  return (
    <section className="flex border-r border-white/80 shadow-[inset_-1px_0_0_#bcbcbc]">
      <div className={clsx('flex flex-col', className)}>
        <div className="flex h-[68px] pt-[5px]">{children}</div>
        {title && (
          <div className="flex items-center pr-[9px] text-[#333]">
            <span className="flex-1 pt-px text-center leading-4">{title}</span>
            <Caret />
          </div>
        )}
      </div>
    </section>
  )
}

function Ribbon() {
  return (
    <div className="flex h-[85px] items-stretch overflow-hidden border-b border-[#8f8f8f] bg-[linear-gradient(#e8e8e8,#dadada_23%,#cecece_24%,#d4d4d4_100%)]">
      <RibbonGroup title="插入" className="w-[223px]">
        <div className="flex pl-[7px]">
          {insertItems.map((item) => <RibbonButton key={item.label} {...item} />)}
          <div className="flex w-6 flex-col items-center gap-2">
            <button aria-label="创建程序"><CreateProgram /></button>
            <button aria-label="创建方法"><CreateMethod /></button>
          </div>
        </div>
      </RibbonGroup>
      <RibbonGroup title="操作" className="w-[54px]">
        <RibbonButton label="属性" icon={<PropertiesIcon />} width="w-[54px]" menu />
      </RibbonGroup>
      <RibbonGroup title="工序" className="w-[329px]">
        <div className="flex pl-[5px]">
          {operationItems.map((item) => <RibbonButton key={item.label} {...item} />)}
        </div>
      </RibbonGroup>
      {dropGroups.map((item) => (
        <RibbonGroup key={item.label}>
          <RibbonButton {...item} />
        </RibbonGroup>
      ))}
      <RibbonGroup>
        <button className="flex w-[79px] items-start pl-[3px]">
          <span className="flex flex-col items-center">
            <span className="flex h-[34px] items-center"><GcToolIcon /></span>
            <span className="leading-4 whitespace-nowrap">加工工具&nbsp; -</span>
            <span className="leading-2 whitespace-nowrap">GC工具箱</span>
          </span>
          <span className="pt-[46px] pl-[5px]"><Caret /></span>
        </button>
      </RibbonGroup>
      <RibbonGroup>
        <RibbonButton label="同步建模" icon={<SyncIcon />} width="w-[58px]" menu />
      </RibbonGroup>
      <RibbonGroup>
        <RibbonButton label="特征" icon={<FeatureIcon />} width="w-[42px]" menu />
      </RibbonGroup>
      <button aria-label="功能区选项" className="mr-[7px] mb-2 ml-auto self-end"><Caret /></button>
    </div>
  )
}

// ---------- selection bar ----------

function ToolButton({ name, on, width = 'w-6', children }: { name: string; on?: boolean; width?: string; children: ReactNode }) {
  return (
    <button
      aria-label={name}
      className={clsx('flex h-[22px] shrink-0 items-center justify-center', width, on && 'rounded-sm border border-[#555] bg-[#f4f4f4]')}
    >
      {children}
    </button>
  )
}

const LightSep = () => <span className="h-[18px] w-px shrink-0 bg-white shadow-[-1px_0_0_#b4b4b4]" />

function Combo({ name, value, width }: { name: string; value: string; width: string }) {
  return (
    <div className={clsx('relative h-4 shrink-0', width)}>
      <select aria-label={name} className="h-4 w-full appearance-none border border-[#4a5a6a] bg-[#f8f8f8] leading-[14px] text-black outline-none">
        <option>{value}</option>
      </select>
      <span className="pointer-events-none absolute inset-y-px right-px flex w-[15px] items-center justify-center bg-linear-to-b from-[#b8dbf8] to-[#4e96dc]">
        <Svg w={11} h={6}><path d="M0 0H11L5.500 6Z" fill="#0a0a20" /></Svg>
      </span>
    </div>
  )
}

function SelectionBar() {
  return (
    <div className="flex h-7 items-center border-b border-[#a8a8a8] bg-linear-to-b from-[#c2c2c2] to-[#d6d6d6]">
      <button className="flex w-[87px] items-center gap-px pl-[9px]">
        <MenuCursor />
        <span className="pt-px whitespace-nowrap">
          菜单<span className="font-['Liberation_Mono',monospace] text-[10px]">(M)</span>
        </span>
        <span className="pl-[5px]"><Caret /></span>
      </button>
      <LightSep />
      <div className="flex gap-px pl-2">
        <ToolButton name="程序顺序视图"><NavIcon kind="program" /></ToolButton>
        <ToolButton name="机床视图"><NavIcon kind="tool" /></ToolButton>
        <ToolButton name="几何视图" on><NavIcon kind="geometry" /></ToolButton>
        <ToolButton name="加工方法视图"><NavIcon kind="method" /></ToolButton>
      </div>
      <div className="flex pl-[7px]"><LightSep /></div>
      <div className="flex pr-2 pl-2">
        <ToolButton name="刀轨" on><NavIcon kind="path" /></ToolButton>
        <ToolButton name="毛坯"><NavIcon kind="stock" /></ToolButton>
      </div>
      <LightSep />
      <div className="flex gap-2 pr-[5px] pl-[10px]">
        <Combo name="选择过滤器" value="无选择过滤器" width="w-[114px]" />
        <Combo name="选择范围" value="整个装配" width="w-[120px]" />
      </div>
      <ToolButton name="装配"><GrayAssembly /></ToolButton>
      <ToolButton name="过滤"><GrayFilter /></ToolButton>
      <ToolButton name="捕捉点"><SnapPoint /></ToolButton>
      <ToolButton name="捕捉点列表" width="w-3"><Caret /></ToolButton>
      <ToolButton name="移动"><GrayMove /></ToolButton>
      <ToolButton name="扫掠" width="w-7"><GraySweep /></ToolButton>
      <ToolButton name="矩形选择" width="w-5"><MarqueeIcon /></ToolButton>
      <ToolButton name="矩形选择列表" width="w-4"><Caret /></ToolButton>
      <ToolButton name="线框"><WireCube /></ToolButton>
      <ToolButton name="实体"><BlueCube /></ToolButton>
      <div className="flex px-[7px]"><LightSep /></div>
      <ToolButton name="适合窗口"><FitIcon /></ToolButton>
      <ToolButton name="平移"><PanIcon /></ToolButton>
      <ToolButton name="旋转"><RotateIcon /></ToolButton>
      <ToolButton name="视图布局" width="w-7"><ViewLayout /></ToolButton>
      <ToolButton name="视图布局列表" width="w-3"><Caret /></ToolButton>
      <ToolButton name="定向视图"><OrientIcon /></ToolButton>
      <ToolButton name="定向视图列表" width="w-3"><Caret /></ToolButton>
      <ToolButton name="着色" width="w-7"><ShadedIcon /></ToolButton>
      <ToolButton name="着色列表" width="w-2"><Caret /></ToolButton>
      <ToolButton name="编辑显示" width="w-7"><EditObject /></ToolButton>
      <ToolButton name="编辑显示列表" width="w-3"><Caret /></ToolButton>
      <div className="flex pl-[6px]"><LightSep /></div>
      <button aria-label="工具条选项" className="mt-1 mr-[6px] ml-auto"><Caret /></button>
    </div>
  )
}

// ---------- resource bar ----------

function BarTab({ name, active, children }: { name: string; active?: boolean; children: ReactNode }) {
  return (
    <button
      aria-label={name}
      className={clsx(
        'flex shrink-0 items-center rounded-l-sm border border-r-0 border-[#6a6a6a]',
        active ? 'ml-[2px] h-[43px] bg-[#f0f0f0] pl-1' : 'ml-1 h-10 bg-[#dcdcdc] pl-[2px]'
      )}
    >
      {children}
    </button>
  )
}

function ResourceBar() {
  const steps = [
    { name: '滚动到顶部', d: 'M3 3H12M7.500 5L12 10H3Z', off: true },
    { name: '向上滚动', d: 'M7.500 5L12 10H3Z', off: true },
    { name: '向下滚动', d: 'M3 5H12L7.500 10Z' },
    { name: '滚动到底部', d: 'M3 4H12L7.500 9ZM3 11H12' },
  ]
  return (
    <aside className="flex w-[31px] shrink-0 flex-col overflow-hidden border-r border-[#6e6e6e] bg-linear-to-r from-[#bcbcbc] to-[#a4a4a4]">
      <button aria-label="资源条选项" className="mt-[7px] mb-[22px] flex justify-center">
        <Svg>
          <circle cx="8" cy="8" r="4.500" fill="none" stroke="#333" strokeWidth="1.600" />
          <path d="M8 1V4M8 12V15M1 8H4M12 8H15M3 3L5 5M13 3L11 5M3 13L5 11M13 13L11 11" stroke="#333" strokeWidth="1.600" />
        </Svg>
      </button>
      <div className="flex flex-col gap-[2px]">
        {barTabs.map((tab) => (
          <BarTab key={tab.name} name={tab.name} active={tab.active}>{tab.icon}</BarTab>
        ))}
      </div>
      <div className="flex flex-col gap-[14px] pt-[11px]">
        <BarTab name="HD3D 工具"><BarInfo /></BarTab>
        <BarTab name="Web 浏览器"><BarWeb /></BarTab>
        <BarTab name="历史记录"><BarClock /></BarTab>
      </div>
      <div className="pt-[2px]">
        <Svg w={30} h={14}>
          <path d="M4 9V3Q4 1 7 1H30V9Q24 6 18 9T4 9Z" fill="#dadada" />
          <path d="M4 9V3Q4 1 7 1H30M2 8Q8 12 16 9T30 9" fill="none" stroke="#555" strokeWidth="1.300" />
        </Svg>
      </div>
      <div className="flex flex-col pl-2">
        {steps.map((s) => (
          <button key={s.name} aria-label={s.name} className="h-4 w-4 border border-[#8e8e8e] bg-[#d8d8d8]">
            <Svg w={14} h={14}>
              <path d={s.d} fill={s.off ? '#a8a8a8' : '#444'} stroke={s.off ? '#a8a8a8' : '#444'} />
            </Svg>
          </button>
        ))}
      </div>
    </aside>
  )
}

// ---------- navigator ----------

const dots = { fill: 'none', stroke: '#777', strokeDasharray: '1 1.500' }

function Expander({ x }: { x: number }) {
  return (
    <>
      <path d={`M${x + 9} 9.500H${x + 15}`} {...dots} />
      <rect x={x + 0.5} y="5.500" width="8" height="8" rx="1" fill="#fff" stroke="#888" />
      <path d={`M${x + 2} 9.500H${x + 7}`} stroke="#222" />
    </>
  )
}

const Bulb = () => (
  <Svg w={9}>
    <path d="M1.500 3C1.500 0 7.500 0 7.500 3L5.500 10.500H3.500Z" fill="#f2e22a" stroke="#9c8c10" strokeWidth="0.800" />
    <circle cx="4.500" cy="13.500" r="1.700" fill="#f2e22a" stroke="#9c8c10" strokeWidth="0.800" />
  </Svg>
)

const TurnOp = () => (
  <Svg w={17}>
    <path d="M1 4H10L7 8L8 14Z" fill="#cfc368" />
    <path d="M1 4.500H6L7 9L10 14.500H16" fill="none" stroke="#222" strokeWidth="1.200" />
    <path d="M10 1H15V7H12L9 5Z" fill="#a86231" stroke="#3d1e08" />
    <path d="M9 9.500H16M10 12H16" stroke="#23238a" strokeWidth="1.300" />
  </Svg>
)

const treeRows: { label: string; lead: ReactNode; icon: ReactNode; level: number }[] = [
  {
    label: '未用项',
    level: 2,
    lead: <Svg w={20} h={20}><path d="M10.500 20V10.500H19" {...dots} /></Svg>,
    icon: (
      <Svg w={17}>
        <path d="M1.500 3H6L8 5H14.500V14.500H1.500Z" fill="#f3e58c" stroke="#94862a" />
        <path d="M7 7H12V12H7M8 9.500H12" fill="none" stroke="#26267a" strokeWidth="1.300" />
      </Svg>
    ),
  },
  {
    label: 'MCS_SPINDLE',
    level: 2,
    lead: <Svg w={20} h={20}><path d="M10.500 0V5" {...dots} /><Expander x={5} /></Svg>,
    icon: (
      <Svg w={17}>
        <path d="M3.500 13V2M3.500 13L13 7M3.500 13H13" stroke="#333" />
        <path d="M1 4L3.500 0L6 4Z" fill="#2330b8" />
        <path d="M8 9L13 6L12 11Z" fill="#26a03a" />
        <path d="M7 1.500H10L7 4.500H10M12 2L13.500 4L15 2M13.500 4V6" fill="none" stroke="#23238a" />
        <rect x="2" y="11" width="3" height="3" fill="#c4232a" />
        <path d="M11 12L14 15M14 12L11 15" stroke="#c4232a" />
      </Svg>
    ),
  },
  {
    label: 'WORKPIECE',
    level: 3,
    lead: <Svg w={39} h={20}><path d="M29.500 0V5" {...dots} /><Expander x={24} /></Svg>,
    icon: (
      <Svg w={17}>
        <path d="M1 5L6 2L15 3V11L9 15L1 12Z" fill="#7e98e8" stroke="#3750b0" />
        <path d="M1 5L8 7L15 3M8 7V15M4 6V13M11 5V13" fill="none" stroke="#3750b0" />
        <path d="M9 8L14 5V10L9 13Z" fill="#c7d5ff" />
      </Svg>
    ),
  },
  {
    label: 'TURNING_WORKPIECE',
    level: 4,
    lead: <Svg w={58} h={20}><path d="M48.500 0V5" {...dots} /><Expander x={43} /></Svg>,
    icon: (
      <Svg w={17}>
        <ellipse cx="10" cy="8" rx="4.500" ry="6" fill="#d79a2c" stroke="#8a5a0c" />
        <ellipse cx="7" cy="9" rx="4" ry="5" fill="#efc060" stroke="#8a5a0c" />
        <circle cx="4" cy="10" r="3" fill="#fce6ae" stroke="#8a5a0c" strokeWidth="0.700" />
      </Svg>
    ),
  },
  {
    label: 'ROUGH_TURN_OD',
    level: 5,
    lead: <Svg w={81} h={20}><path d="M67.500 0V20M67.500 10.500H76" {...dots} /></Svg>,
    icon: <><Bulb /><span className="w-1" /><TurnOp /></>,
  },
  {
    label: 'ROUGH_BACK_...',
    level: 5,
    lead: <Svg w={81} h={20}><path d="M67.500 0V10.500H76" {...dots} /></Svg>,
    icon: <><Bulb /><span className="w-1" /><TurnOp /></>,
  },
]

function Navigator() {
  return (
    <div className="flex w-[218px] shrink-0 flex-col border-r-2 border-r-[#9a9a9a] bg-[#e4e4e4] px-[7px] pb-[5px]">
      <div className="flex h-[30px] items-center justify-between pt-[2px] pr-1 pl-1">
        <h2 className="font-['Liberation_Mono','Noto_Sans_CJK_SC',monospace] text-[13px] font-bold whitespace-nowrap">工序导航器 - 几何</h2>
        <button aria-label="最大化面板">
          <Svg w={14} h={12}><rect x="0.500" y="0.500" width="13" height="11" fill="none" stroke="#000" /><path d="M0 1H14" stroke="#000" strokeWidth="2" /></Svg>
        </button>
      </div>
      <div className="flex min-h-0 flex-1 flex-col border border-[#555] bg-[#f5f5f5]">
        <div className="h-[17px] shrink-0 border-b border-[#8a8a8a] bg-linear-to-b from-[#f4f4f4] to-[#d2d2d2] pt-px pl-[7px] leading-4">名称</div>
        <ul
          role="tree"
          aria-label="几何"
          className="min-h-0 flex-1 overflow-hidden bg-[repeating-linear-gradient(#f5f5f5_0_19px,#dcdcdc_19px_20px,#ededed_20px_39px,#dcdcdc_39px_40px)] font-['Liberation_Mono','Noto_Sans_CJK_SC',monospace] text-[10px] text-[#222]"
        >
          <li role="treeitem" aria-level={1} className="h-5 pt-px pl-[3px] leading-5">GEOMETRY</li>
          {treeRows.map((row) => (
            <li key={row.label} role="treeitem" aria-level={row.level} className="flex h-5 items-center">
              {row.lead}
              {row.icon}
              <span className={clsx('pt-px pl-px whitespace-nowrap', row.label === '未用项' && 'text-xs')}>{row.label}</span>
            </li>
          ))}
        </ul>
        <div className="flex h-[17px] shrink-0 bg-[#e2e2de]">
          <button aria-label="向左滚动" className="flex w-4 items-center justify-center border border-t-white border-r-[#555] border-b-[#555] border-l-white bg-[#d4d0c8]">
            <Svg w={4} h={7}><path d="M4 0V7L0 3.500Z" fill="#000" /></Svg>
          </button>
          <span className="w-[60px] border border-t-white border-r-[#555] border-b-[#555] border-l-white bg-[#d4d2c8]" />
          <button aria-label="向右滚动" className="ml-auto flex w-4 items-center justify-center border border-t-white border-r-[#555] border-b-[#555] border-l-white bg-[#d4d0c8]">
            <Svg w={4} h={7}><path d="M0 0V7L4 3.500Z" fill="#000" /></Svg>
          </button>
        </div>
      </div>
      <div className="flex h-3 items-center gap-1">
        <span className="h-px flex-1 bg-[#aaa]" />
        <span className="h-[6px] w-8 border border-[#a0a0a0] bg-[#d0d0d0]" />
        <span className="h-px flex-1 bg-[#aaa]" />
      </div>
      {['相依性', '细节'].map((title) => (
        <button
          key={title}
          className="flex h-[23px] shrink-0 items-stretch border border-t-white border-r-[#999] border-b-[#999] border-l-[#ccc] bg-linear-to-b from-[#f2f4f6] to-[#d6d8da] text-[#0c0c50]"
        >
          <span className="flex-1 pt-px pl-[5px] text-left leading-5">{title}</span>
          <span className="flex w-[23px] items-center justify-center border-l border-[#999]">
            <Svg w={12} h={10}><path d="M1.500 1L6 8L10.500 1" fill="none" stroke="#555" strokeWidth="2.200" /></Svg>
          </span>
        </button>
      ))}
    </div>
  )
}

// ---------- graphics window ----------

// turned shaft, one shaded slice per diameter
const slices = [
  'M20 38H67V221H20Z',
  'M67 57H112V202H67Z',
  'M112 57L184 76V184L112 202Z',
  'M184 76H237V184H184Z',
  'M237 84H252V176H237Z',
  'M252 76H305V184H252Z',
  'M305 61H325V198H305Z',
  'M325 84H340V176H325Z',
  'M340 69H408V191H340Z',
]

const outline =
  'M20.500 38.500H66.500V57.500H113L184 76.500H237.500V84H252.500V76.500H305V61.500H325V84H339.500V69H408.500L415.500 76.500V183.500L408.500 190.500H339.500V176H325V198H305V183.500H252.500V176H237.500V183.500H184L113 202H66.500V221H20.500Z'

function ShaftModel() {
  return (
    <svg width="440" height="240" viewBox="0 0 440 240" className="absolute top-[105px] left-[191px]" role="img" aria-label="车削轴">
      <defs>
        <linearGradient id="steel" x2="0" y2="1">
          <stop offset="0" stopColor="#aabdc4" />
          <stop offset="0.080" stopColor="#bdd3da" />
          <stop offset="0.200" stopColor="#c5dee4" />
          <stop offset="0.340" stopColor="#c2dae0" />
          <stop offset="0.500" stopColor="#97a8ab" />
          <stop offset="0.700" stopColor="#667273" />
          <stop offset="0.850" stopColor="#3a4545" />
          <stop offset="1" stopColor="#323b3b" />
        </linearGradient>
        <linearGradient id="shine" x2="0" y2="1">
          <stop offset="0" stopColor="#d4e9ed" stopOpacity="0.300" />
          <stop offset="0.400" stopColor="#e6f6f6" />
          <stop offset="0.750" stopColor="#e6f6f6" />
          <stop offset="1" stopColor="#c4d8da" stopOpacity="0.200" />
        </linearGradient>
      </defs>
      <g shapeRendering="crispEdges">
        {slices.map((d) => <path key={d} d={d} fill="url(#steel)" />)}
        <path d="M112 80L184 88V122H112Z" fill="url(#shine)" />
      </g>
      <path d="M408 69L415.500 76.500V183.500L408 191Z" fill="url(#steel)" />
      <path d="M408 69L415.500 76.500V183.500L408 191Z" fill="#6a7c84" opacity="0.350" />
      <path d={outline} fill="none" stroke="#4a62a4" />

      <path d="M21 130V44" stroke="#2a8c34" strokeWidth="1.500" />
      <path d="M17.500 45L20.500 27L23.500 45Z" fill="#1f7a2a" />
      <path d="M21 130H106" stroke="#e08888" strokeWidth="1.500" />
      <path d="M104 126L120 130L104 133Z" fill="#d46a6a" />
      <circle cx="20.500" cy="130" r="3.500" fill="#10309c" />
      <g fontFamily="Liberation Sans, sans-serif" fontSize="13">
        <text x="26" y="24" fill="#3c8c3c">YM</text>
        <text x="108" y="125" fill="#b03a4a">XM</text>
        <text x="21" y="130" fill="#1c44d0">ZM</text>
      </g>
    </svg>
  )
}

function ViewTriad() {
  return (
    <svg width="60" height="60" viewBox="0 0 60 60" className="absolute bottom-[40px] left-[41px]" role="img" aria-label="视图坐标系">
      <rect x="8" y="28" width="21" height="20" fill="#dcdcdc" stroke="#a4a4a4" />
      <rect x="12" y="32" width="13" height="12" fill="#d4d4d4" />
      <path d="M8.500 48V20" stroke="#3a8c3a" strokeWidth="1.500" />
      <path d="M5.500 25L8.500 15L11.500 25Z" fill="#1f7a2a" />
      <path d="M8 48H34" stroke="#a86a6a" strokeWidth="1.500" />
      <path d="M30 46L43 48L30 50Z" fill="#c8232c" />
      <rect x="5" y="44" width="7" height="8" rx="1" fill="#1c3cba" stroke="#7a9ae4" />
      <g fontFamily="Liberation Sans, sans-serif" fontSize="12">
        <text x="4.500" y="13" fill="#3c8c3c">Y</text>
        <text x="44" y="53" fill="#c43a4a">X</text>
      </g>
    </svg>
  )
}

function CompanyMark() {
  return (
    <div className="absolute right-[64px] bottom-[41px] w-[184px] bg-[#fbeee0] text-[#cc1238]">
      <div className="flex items-center">
        <Svg w={36} h={33}>
          <path d="M0 0H20C40 0 40 32 20 32H0Z" fill="#f5114e" />
          <path d="M0 6H24L13 20C11 22 13 23 24 23L21 26H0C4 25 12 16 15 11C16 9 10 8 0 8Z" fill="#fbeee0" />
        </Svg>
        <span className="flex flex-1 justify-between pr-[2px] pl-[30px] font-['Noto_Sans_CJK_SC',sans-serif] text-[25px] leading-8 font-bold">
          {['兆', '迪', '科', '技'].map((c) => <span key={c}>{c}</span>)}
        </span>
      </div>
      <div className="pb-px text-center font-['DejaVu_Sans',sans-serif] text-[21px] leading-5 font-bold whitespace-nowrap">010−82176248</div>
    </div>
  )
}

function StatusBar() {
  return (
    <footer className="flex h-[23px] shrink-0 items-stretch border-t border-b-2 border-t-[#dedede] border-b-[#9a9a9a] bg-[#d3d3d3]">
      <span className="w-[464px]" />
      <span className="flex-1 border-l border-white" />
      <span className="w-5 border-l border-white" />
      <span className="flex w-14 items-center border-l border-white pl-[2px]">
        <Svg>
          <path d="M1 4V1H4M12 1H15V4M15 12V15H12M4 15H1V12" fill="none" stroke="#777" />
          <rect x="3" y="4" width="10" height="8" fill="#fff" stroke="#33435e" strokeWidth="1.500" />
          <rect x="5" y="6" width="6" height="4" fill="#3f78b8" />
        </Svg>
      </span>
      <span className="w-[18px] border-l border-white" />
    </footer>
  )
}

export default function App() {
  return (
    <div className="flex h-screen flex-col overflow-hidden bg-[#f5f5f5] font-['Liberation_Sans','Noto_Sans_CJK_SC',sans-serif] text-xs text-black">
      <TitleBar />
      <TabRow />
      <Ribbon />
      <SelectionBar />
      <div className="flex min-h-0 flex-1">
        <ResourceBar />
        <Navigator />
        <main className="relative flex-1 overflow-hidden bg-[#f5f5f5]">
          <ShaftModel />
          <ViewTriad />
          <CompanyMark />
        </main>
      </div>
      <StatusBar />
    </div>
  )
}
